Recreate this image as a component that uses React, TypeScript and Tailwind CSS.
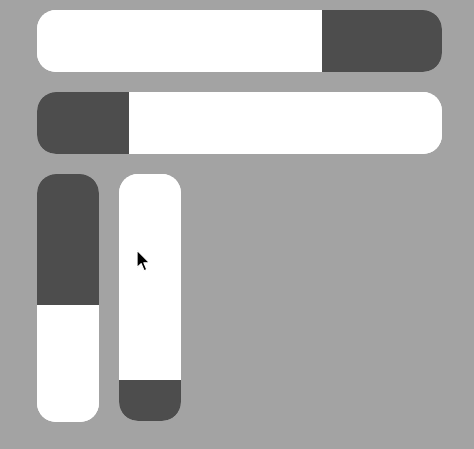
import React from "react";

export default function App() {
  return (
    <div className="relative w-[474px] h-[449px] bg-[#a3a3a3] overflow-hidden">
      <div className="flex flex-col gap-[20px] pl-[37px] pt-[10px]">
        <div className="flex w-[405px] h-[62px] rounded-[19px] overflow-hidden bg-white">
          <div className="flex-1 bg-white" />
          <div className="w-[120px] bg-[#4d4d4d]" />
        </div>
        <div className="flex w-[405px] h-[62px] rounded-[19px] overflow-hidden bg-white">
          <div className="w-[92px] bg-[#4d4d4d]" />
          <div className="flex-1 bg-white" />
        </div>
        <div className="flex gap-[20px]">
          <div className="flex flex-col w-[62px] h-[248px] rounded-[19px] overflow-hidden bg-white">
            <div className="h-[131px] bg-[#4d4d4d]" />
            <div className="flex-1 bg-white" />
          </div>
          <div className="flex flex-col w-[62px] h-[247px] rounded-[19px] overflow-hidden bg-white">
            <div className="flex-1 bg-white" />
            <div className="h-[41px] bg-[#4d4d4d]" />
          </div>
        </div>
      </div>
      <svg
        className="absolute left-[136px] top-[249px]"
        width="15"
        height="24"
        viewBox="0 0 14 22"
      >
        <path
          d="M1 1 L1 17 L4.8 13.4 L7.6 20 L10 19 L7.3 12.6 L12.4 12.6 Z"
          fill="#000"
          stroke="#fff"
          strokeWidth="1"
          strokeLinejoin="round"
        />
      </svg>
    </div>
  );
}
